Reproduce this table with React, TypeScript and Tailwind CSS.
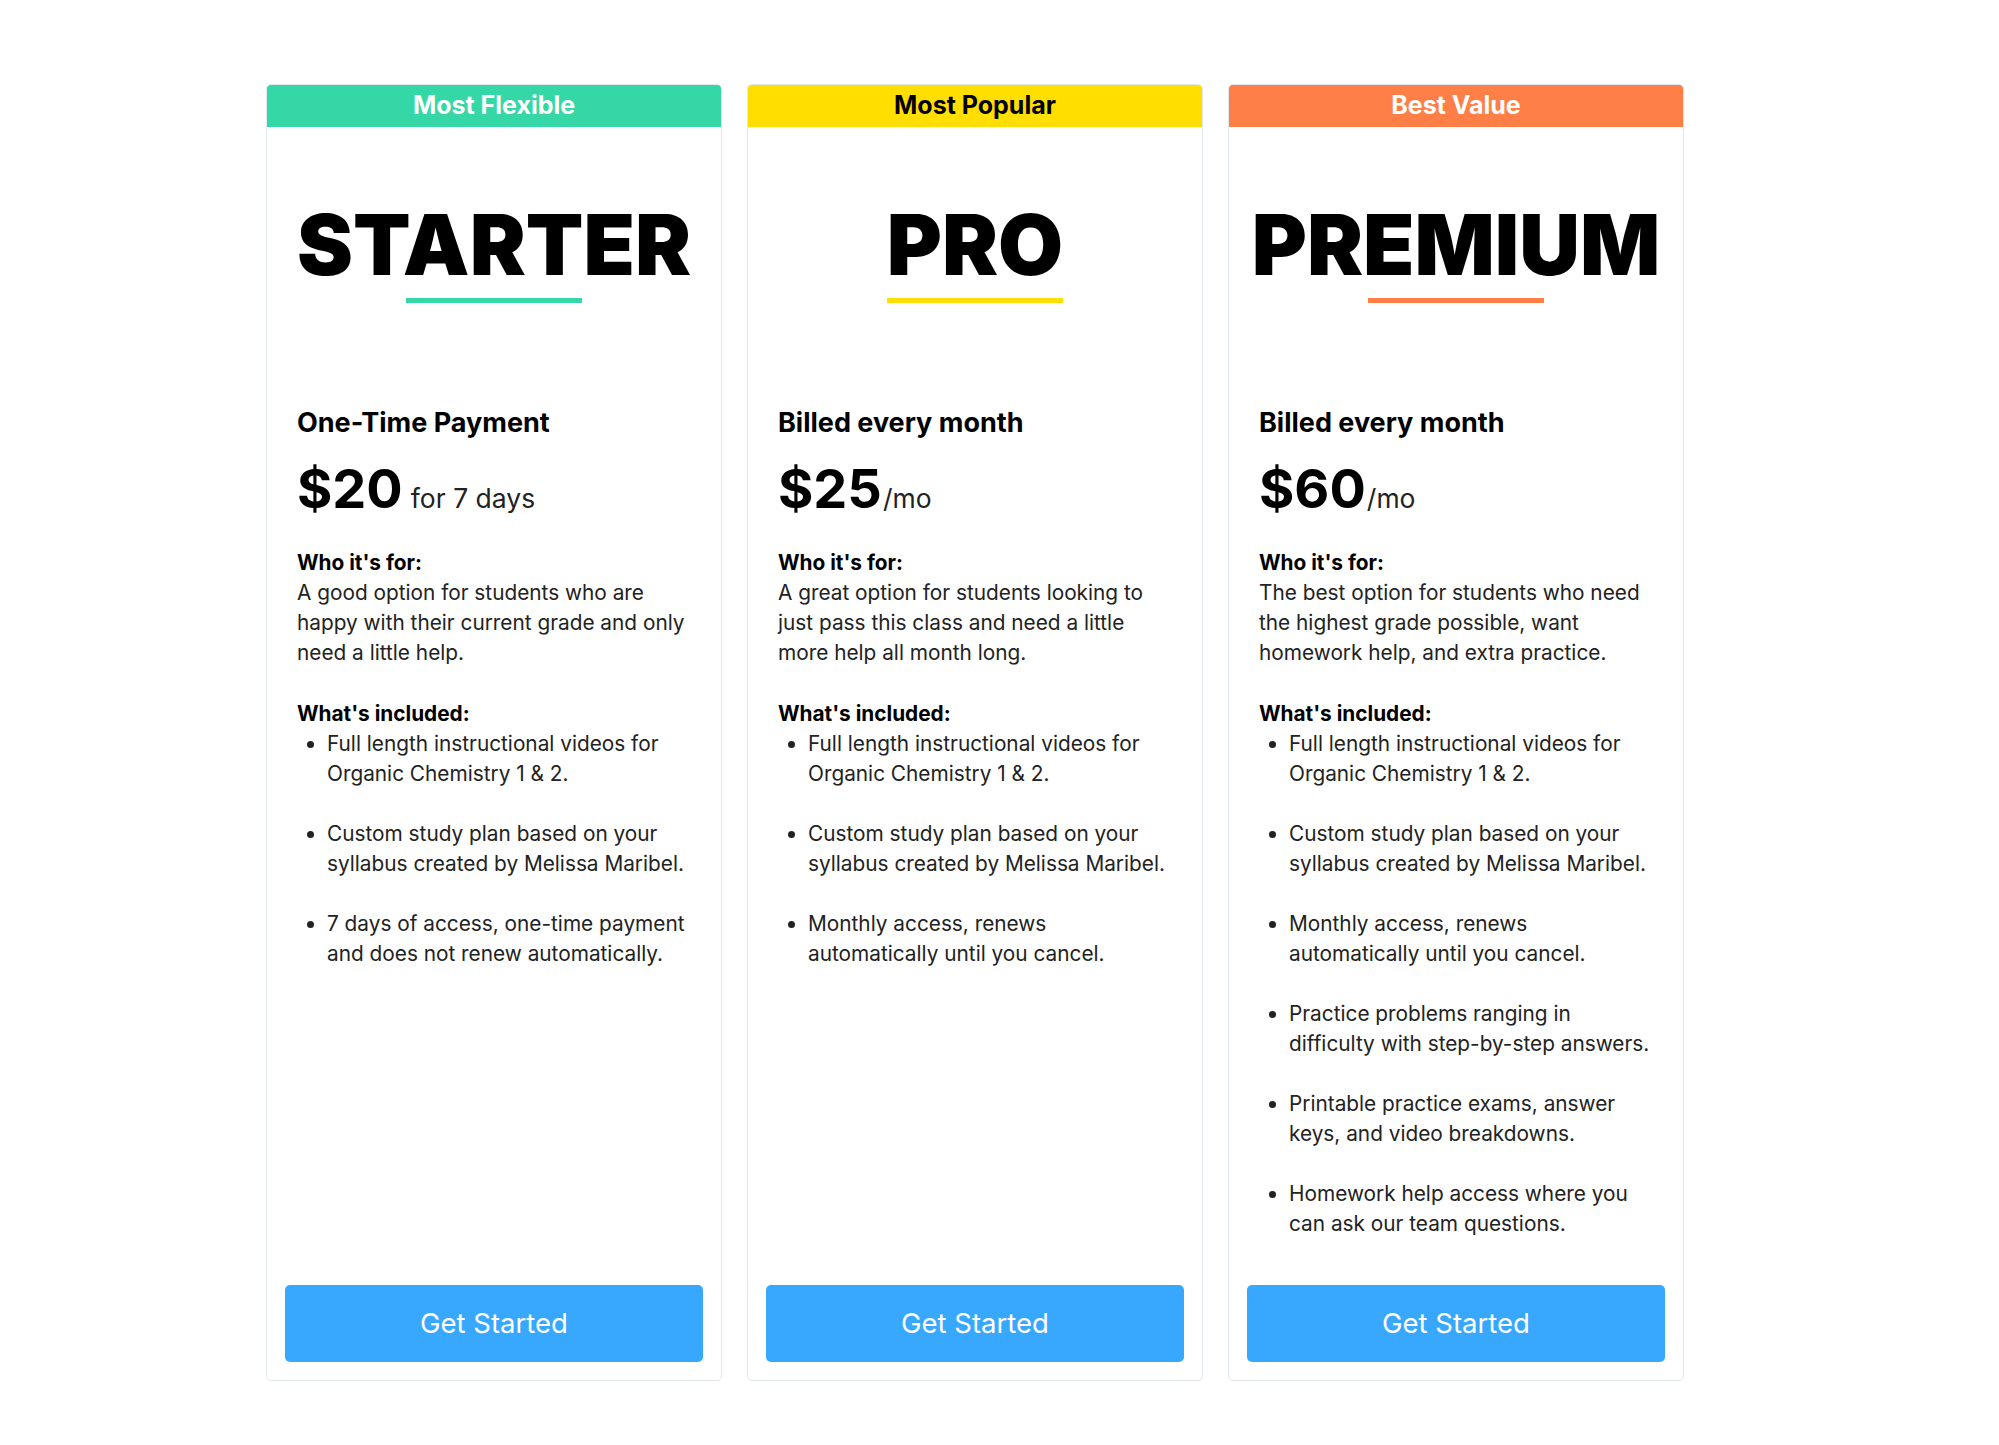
import { FC } from "react";

type Plan = {
	badge: string;
	badgeClass: string;
	name: string;
	lineClass: string;
	billing: string;
	price: string;
	unit: string;
	unitClass: string;
	who: string;
	items: string[];
};

const plans: Plan[] = [
	{
		badge: "Most Flexible",
		badgeClass: "bg-[#34d7a5] text-white",
		name: "STARTER",
		lineClass: "bg-[#34d7a5]",
		billing: "One-Time Payment",
		price: "$20",
		unit: "for 7 days",
		unitClass: "ml-[8px]",
		who: "A good option for students who are happy with their current grade and only need a little help.",
		items: [
			"Full length instructional videos for Organic Chemistry 1 & 2.",
			"Custom study plan based on your syllabus created by Melissa Maribel.",
			"7 days of access, one-time payment and does not renew automatically.",
		],
	},
	{
		badge: "Most Popular",
		badgeClass: "bg-[#ffde00] text-black",
		name: "PRO",
		lineClass: "bg-[#ffde00]",
		billing: "Billed every month",
		price: "$25",
		unit: "/mo",
		unitClass: "ml-[1px]",
		who: "A great option for students looking to just pass this class and need a little more help all month long.",
		items: [
			"Full length instructional videos for Organic Chemistry 1 & 2.",
			"Custom study plan based on your syllabus created by Melissa Maribel.",
			"Monthly access, renews automatically until you cancel.",
		],
	},
	{
		badge: "Best Value",
		badgeClass: "bg-[#ff7f47] text-white",
		name: "PREMIUM",
		lineClass: "bg-[#ff7f47]",
		billing: "Billed every month",
		price: "$60",
		unit: "/mo",
		unitClass: "ml-[1px]",
		who: "The best option for students who need the highest grade possible, want homework help, and extra practice.",
		items: [
			"Full length instructional videos for Organic Chemistry 1 & 2.",
			"Custom study plan based on your syllabus created by Melissa Maribel.",
			"Monthly access, renews automatically until you cancel.",
			"Practice problems ranging in difficulty with step-by-step answers.",
			"Printable practice exams, answer keys, and video breakdowns.",
			"Homework help access where you can ask our team questions.",
		],
	},
];

const PlanCard: FC<{ plan: Plan }> = ({ plan }) => {
	return (
		<div className="flex w-[456px] flex-col overflow-hidden rounded-[5px] border border-[#e2e6ed] bg-white">
			{/* Badge */}
			<div className={`flex h-[42px] items-center justify-center text-[25px] font-bold ${plan.badgeClass}`}>
				{plan.badge}
			</div>

			{/* Plan name */}
			<div className="flex flex-col items-center pt-[76px]">
				<h2 className="text-[84px] leading-[84px] font-black text-black">{plan.name}</h2>
				<div className={`mt-[11px] h-[5px] w-[176px] ${plan.lineClass}`} />
			</div>

			<div className="flex flex-1 flex-col px-[30px] pt-[104px] text-[#222]">
				<h3 className="text-[27px] leading-[32px] font-bold text-black">{plan.billing}</h3>
				<div className="mt-[22px] flex items-baseline text-black">
					<span className="text-[54px] leading-[56px] font-bold">{plan.price}</span>
					<span className={`text-[26.5px] text-[#222] ${plan.unitClass}`}>{plan.unit}</span>
				</div>

				<div className="mt-[29px] text-[20.8px] leading-[30px]">
					<p className="font-bold text-black">Who it's for:</p>
					<p>{plan.who}</p>
				</div>

				<div className="mt-[31px] text-[20.8px] leading-[30px]">
					<p className="font-bold text-black">What's included:</p>
					<ul className="list-disc pl-[30px]">
						{plan.items.map((item) => (
							<li key={item} className="mb-[30px]">
								{item}
							</li>
						))}
					</ul>
				</div>
			</div>

			<div className="px-[18px] pb-[18px] pt-[16px]">
				<button className="flex h-[77px] w-full items-center justify-center rounded-[5px] bg-[#38a8ff] text-[27.5px] text-white">
					Get Started
				</button>
			</div>
		</div>
	);
};

export default function App() {
	return (
		<div className="min-h-screen bg-white font-['Inter',sans-serif]">
			<div className="flex items-stretch gap-[25px] pl-[266px] pt-[84px]">
				{plans.map((p) => (
					<PlanCard key={p.name} plan={p} />
				))}
			</div>
		</div>
	);
}
